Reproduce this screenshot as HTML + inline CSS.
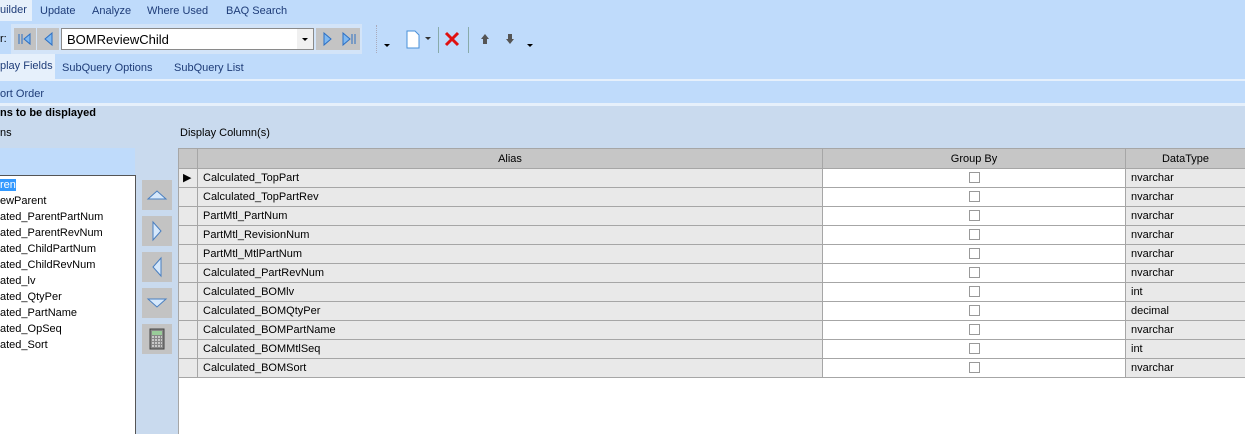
<!DOCTYPE html><html><head><style>
*{margin:0;padding:0;box-sizing:border-box}
body{width:1245px;height:434px;overflow:hidden;position:relative;background:#c9daee;font-family:"Liberation Sans",Arial,sans-serif;font-size:11px;color:#000}
.a{position:absolute}
.t{color:#1e3c78;font-size:11px}
.btn{position:absolute;background:#c4c4c4;width:22px;height:22px}
.sb{position:absolute;left:142px;width:30px;height:30px;background:#c3c3c3}
table{border-collapse:collapse;position:absolute;left:178px;top:148px;width:1067px;table-layout:fixed}
td,th{border:1px solid #a6a6a6;height:19px;font-weight:normal;font-size:11px;padding:0 5px;white-space:nowrap;overflow:hidden;line-height:16px}
th{background:#c6c6c6;text-align:center;height:20px}
td{background:#e9e9e9}
td.g{background:#fff;text-align:center;padding:0}
.cb{display:block;margin:0 auto;width:11px;height:11px;border:1px solid #999;background:#fff;position:relative;top:-1px}
</style></head><body>
<div class="a" style="left:0;top:0;width:1245px;height:21px;background:#bfdbfb"></div>
<div class="a" style="left:0;top:0;width:32px;height:21px;background:#e6f0fb"></div>
<div class="a t" style="left:0;top:4px">uilder</div>
<div class="a t" style="left:40px;top:5px">Update</div>
<div class="a t" style="left:92px;top:5px">Analyze</div>
<div class="a t" style="left:147px;top:5px">Where Used</div>
<div class="a t" style="left:226px;top:5px">BAQ Search</div>
<div class="a" style="left:0;top:21px;width:1245px;height:33px;background:#bfdbfb"></div>
<div class="a t" style="left:0;top:33px;color:#000">r:</div>
<div class="a" style="left:11px;top:24px;width:351px;height:30px;background:#d3e4f8"></div>
<div class="btn" style="left:14px;top:28px;background:#c2c2c2"><svg width="22" height="22"><path d="M5 6v10M8 6v10M16 6l-6 5 6 5z" stroke="#2b6fc4" fill="#7fb8f0" stroke-width="1"/></svg></div>
<div class="btn" style="left:37px;top:28px"><svg width="22" height="22"><path d="M15 5l-7 6 7 6z" stroke="#2b6fc4" fill="#7fb8f0"/></svg></div>
<div class="a" style="left:61px;top:28px;width:253px;height:22px;background:#fff;border:1px solid #8a8a8a;font-size:13px;padding:3px 5px">BOMReviewChild</div>
<div class="a" style="left:297px;top:29px;width:16px;height:20px;background:#f0f0f0"><svg width="16" height="20"><path d="M5 9h6l-3 3z" fill="#000"/></svg></div>
<div class="btn" style="left:316px;top:28px"><svg width="22" height="22"><path d="M8 5l7 6-7 6z" stroke="#2b6fc4" fill="#7fb8f0"/></svg></div>
<div class="btn" style="left:338px;top:28px"><svg width="22" height="22"><path d="M5 5l7 6-7 6zM14 6v10M17 6v10" stroke="#2b6fc4" fill="#7fb8f0"/></svg></div>
<svg class="a" style="left:382px;top:40px" width="10" height="10"><path d="M2 4h6l-3 3z" fill="#000"/></svg>
<div class="a" style="left:376px;top:25px;width:2px;height:28px;border-left:1px dotted #aab"></div>
<svg class="a" style="left:404px;top:28px" width="28" height="24"><path d="M3 3h8l4 4v13H3z" fill="#fff" stroke="#4a90d9"/><path d="M21 9h6l-3 3z" fill="#333"/></svg>
<div class="a" style="left:438px;top:27px;width:1px;height:26px;background:#8aa"></div>
<svg class="a" style="left:442px;top:29px" width="20" height="20"><path d="M4 4l12 12M16 4L4 16" stroke="#e01010" stroke-width="3"/></svg>
<div class="a" style="left:468px;top:27px;width:1px;height:26px;background:#8aa"></div>
<svg class="a" style="left:478px;top:32px" width="14" height="14"><path d="M7 2l4 5H9v5H5V7H3z" fill="#555"/></svg>
<svg class="a" style="left:503px;top:32px" width="14" height="14"><path d="M7 12l4-5H9V2H5v5H3z" fill="#555"/></svg>
<svg class="a" style="left:526px;top:42px" width="10" height="8"><path d="M1 2h6l-3 3z" fill="#000"/></svg>
<div class="a" style="left:0;top:54px;width:1245px;height:25px;background:#bfdbfb"></div>
<div class="a" style="left:0;top:54px;width:55px;height:25px;background:#e6f0fb"></div>
<div class="a t" style="left:0;top:60px">play Fields</div>
<div class="a t" style="left:62px;top:62px">SubQuery Options</div>
<div class="a t" style="left:174px;top:62px">SubQuery List</div>
<div class="a" style="left:0;top:79px;width:1245px;height:2px;background:#e6f0fb"></div>
<div class="a" style="left:0;top:81px;width:1245px;height:22px;background:#bfdbfb"></div>
<div class="a t" style="left:0;top:88px">ort Order</div>
<div class="a" style="left:0;top:103px;width:1245px;height:3px;background:#e6f0fb"></div>
<div class="a" style="left:0;top:107px;font-weight:bold">ns to be displayed</div>
<div class="a" style="left:0;top:127px">ns</div>
<div class="a" style="left:180px;top:127px">Display Column(s)</div>
<div class="a" style="left:0;top:148px;width:135px;height:27px;background:#bfdbfb"></div>
<div class="a" style="left:0;top:175px;width:136px;height:259px;background:#fff;border-right:1px solid #555;border-top:1px solid #555;line-height:16px;padding-top:1px">
<span style="background:#3399ff;color:#fff">ren</span><br>ewParent<br>ated_ParentPartNum<br>ated_ParentRevNum<br>ated_ChildPartNum<br>ated_ChildRevNum<br>ated_lv<br>ated_QtyPer<br>ated_PartName<br>ated_OpSeq<br>ated_Sort</div>
<div class="sb" style="top:180px"><svg width="30" height="30"><path d="M6 19L15 11l9 8z" fill="#d6e8fb" stroke="#4a7fc0"/></svg></div>
<div class="sb" style="top:216px"><svg width="30" height="30"><path d="M11 6l8 9-8 9z" fill="#d6e8fb" stroke="#4a7fc0"/></svg></div>
<div class="sb" style="top:252px"><svg width="30" height="30"><path d="M19 6l-8 9 8 9z" fill="#d6e8fb" stroke="#4a7fc0"/></svg></div>
<div class="sb" style="top:288px"><svg width="30" height="30"><path d="M6 11l9 8 9-8z" fill="#d6e8fb" stroke="#4a7fc0"/></svg></div>
<div class="sb" style="top:324px"><svg width="30" height="30"><rect x="8" y="5" width="14" height="20" fill="#888" stroke="#444"/><rect x="10" y="7" width="10" height="4" fill="#9c9"/><path d="M10 13h10M10 16h10M10 19h10M10 22h10" stroke="#ddd" stroke-width="1.5" stroke-dasharray="2 1"/></svg></div>
<div class="a" style="left:178px;top:148px;width:1067px;height:286px;background:#fff;border-left:1px solid #a6a6a6"></div>
<table>
<colgroup><col style="width:19px"><col style="width:625px"><col style="width:303px"><col style="width:120px"></colgroup>
<tr><th></th><th>Alias</th><th>Group By</th><th>DataType</th></tr>
<tr><td style="padding:0 4px">&#9654;</td><td>Calculated_TopPart</td><td class="g"><span class="cb"></span></td><td>nvarchar</td></tr>
<tr><td></td><td>Calculated_TopPartRev</td><td class="g"><span class="cb"></span></td><td>nvarchar</td></tr>
<tr><td></td><td>PartMtl_PartNum</td><td class="g"><span class="cb"></span></td><td>nvarchar</td></tr>
<tr><td></td><td>PartMtl_RevisionNum</td><td class="g"><span class="cb"></span></td><td>nvarchar</td></tr>
<tr><td></td><td>PartMtl_MtlPartNum</td><td class="g"><span class="cb"></span></td><td>nvarchar</td></tr>
<tr><td></td><td>Calculated_PartRevNum</td><td class="g"><span class="cb"></span></td><td>nvarchar</td></tr>
<tr><td></td><td>Calculated_BOMlv</td><td class="g"><span class="cb"></span></td><td>int</td></tr>
<tr><td></td><td>Calculated_BOMQtyPer</td><td class="g"><span class="cb"></span></td><td>decimal</td></tr>
<tr><td></td><td>Calculated_BOMPartName</td><td class="g"><span class="cb"></span></td><td>nvarchar</td></tr>
<tr><td></td><td>Calculated_BOMMtlSeq</td><td class="g"><span class="cb"></span></td><td>int</td></tr>
<tr><td></td><td>Calculated_BOMSort</td><td class="g"><span class="cb"></span></td><td>nvarchar</td></tr>
</table>
</body></html>
